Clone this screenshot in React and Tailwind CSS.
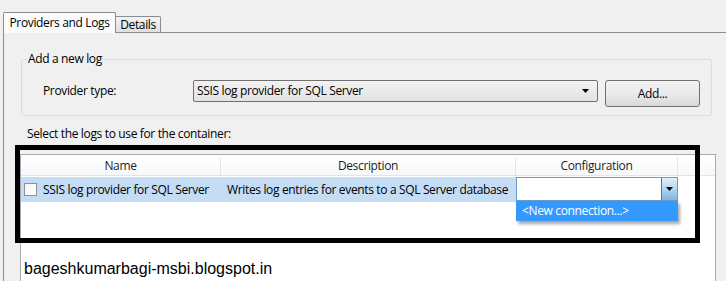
import React from "react";

const F = { fontFamily: '"Open Sans", "Noto Sans", sans-serif' };

function Arrow({ className = "" }) {
  return (
    <svg width="7" height="4" viewBox="0 0 7 4" className={className}>
      <path d="M0 0H7L3.5 4Z" fill="#000" />
    </svg>
  );
}

export default function App() {
  return (
    <div
      className="relative w-[726px] h-[281px] overflow-hidden bg-[#f0f0f0] text-[12px] text-black tracking-[-0.35px]"
      style={F}
    >
      {/* tab strip */}
      <div className="flex items-end h-[32px] pl-[3px]">
        <div className="relative z-10 -mb-px h-[21px] w-[113px] bg-[#fbfbfb] border border-b-0 border-[#898c95] rounded-t-[2px] flex items-center justify-center leading-none">
          Providers and Logs
        </div>
        <div className="h-[16px] w-[45px] bg-gradient-to-b from-[#f3f3f3] to-[#e0e0e0] border border-l-0 border-b-0 border-[#898c95] rounded-tr-[2px] flex items-center justify-center leading-none pt-[1px]">
          Details
        </div>
        <div className="flex-1" />
      </div>

      {/* panel */}
      <div className="ml-[3px] h-[249px] border-l border-t border-[#898c95] bg-[#f0f0f0] flex flex-col">
        <fieldset className="ml-[17px] mr-[14px] mt-[19px] border border-[#d5dfe5] rounded-[3px] h-[65px] pl-[7px] pr-[10px]">
          <legend className="px-[1px] ml-[-2px] leading-[14px]">Add a new log</legend>
          <div className="flex items-start mt-[14px]">
            <div className="w-[164px] pl-[14px] leading-[22px]">Provider type:</div>
            <div className="w-[405px] h-[22px] border border-[#707070] rounded-[2px] bg-gradient-to-b from-[#f2f2f2] to-[#e3e3e3] flex items-center pl-[3px] pr-[8px]">
              <span className="flex-1 leading-none">SSIS log provider for SQL Server</span>
              <Arrow />
            </div>
            <div className="ml-[7px] w-[95px] h-[27px] border border-[#707070] rounded-[3px] bg-gradient-to-b from-[#f2f2f2] via-[#ebebeb] to-[#d8d8d8] flex items-center justify-center leading-none">
              Add...
            </div>
          </div>
        </fieldset>

        <div className="ml-[23px] mt-[11px] leading-[14px]">Select the logs to use for the container:</div>

        {/* list view */}
        <div className="ml-[16px] mr-[10px] mt-[13px] flex-1 bg-white border border-[#a5acb5] border-b-0 relative">
          <div className="flex h-[21px] border-b border-[#e5e5e5] bg-gradient-to-b from-white to-[#f7f8fa] text-[#1e1e1e] pt-[2px]">
            <div className="w-[200px] border-r border-[#e5e5e5] flex items-center justify-center">Name</div>
            <div className="w-[295px] border-r border-[#e5e5e5] flex items-center justify-center">Description</div>
            <div className="w-[162px] border-r border-[#e5e5e5] flex items-center justify-center">Configuration</div>
          </div>
          <div className="flex h-[25px] mt-[1px]">
            <div className="w-[495px] bg-[#c4ddf5] flex items-center">
              <div className="ml-[3px] w-[13px] h-[13px] border border-[#8e8f8f] bg-gradient-to-br from-[#f4f4f4] to-white" />
              <div className="w-[184px] pl-[6px]">SSIS log provider for SQL Server</div>
              <div className="pl-[6px]">Writes log entries for events to a SQL Server database</div>
            </div>
            <div className="relative w-[162px] h-[24px] border border-[#6b9bc6] bg-white flex justify-end">
              <div className="w-[16px] h-full border-l border-[#3c7fb1] bg-gradient-to-b from-[#e2f0fb] via-[#b3d5ef] to-[#7db6e2] flex items-center justify-center">
                <Arrow />
              </div>
              <div className="absolute left-[-1px] top-[23px] w-[162px] h-[20px] bg-[#3399ff] text-white border border-[#3399ff] flex items-center pl-[5px] shadow-[2px_3px_3px_rgba(0,0,0,0.35)]">
                &lt;New connection...&gt;
              </div>
            </div>
          </div>
          <div
            className="mt-[55px] ml-[3px] text-[16px] tracking-normal text-black"
            style={{ fontFamily: '"Liberation Sans", Arial, sans-serif' }}
          >
            bageshkumarbagi-msbi.blogspot.in
          </div>
        </div>
      </div>

      {/* annotation rectangle */}
      <div className="absolute left-[15px] top-[145px] w-[685px] h-[98px] border-[5px] border-black pointer-events-none" />
    </div>
  );
}
